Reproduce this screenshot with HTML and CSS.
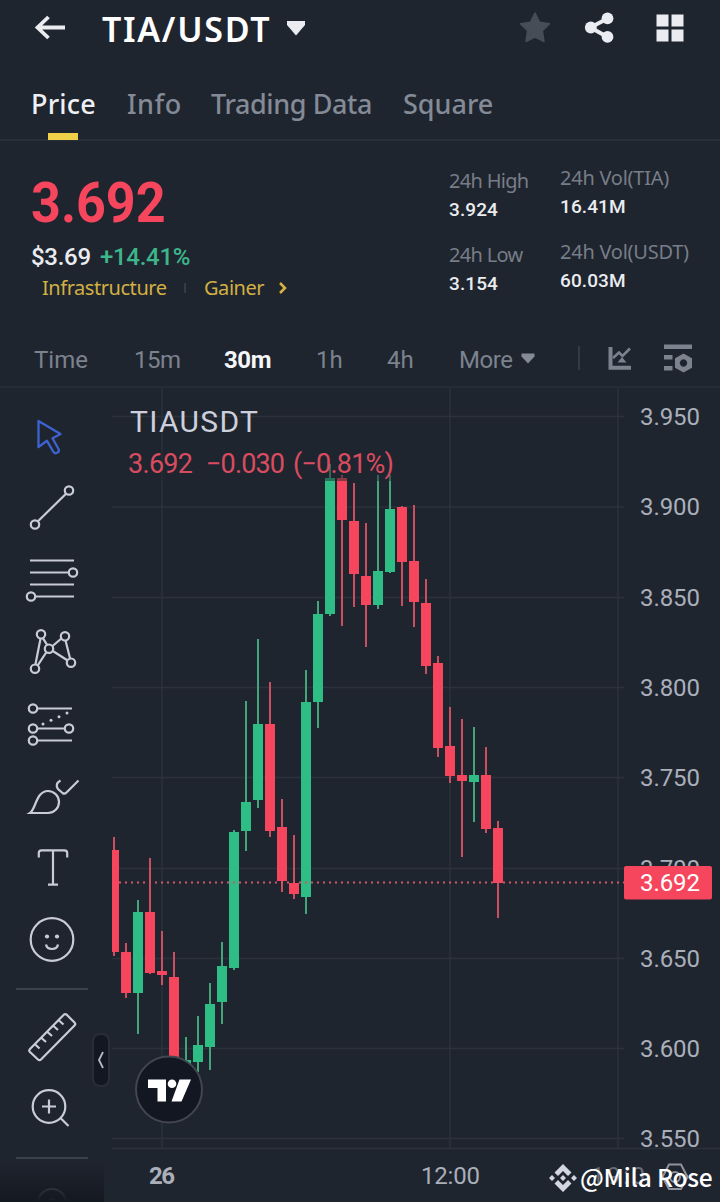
FILE: index.html
```html
<!DOCTYPE html>
<html lang="en">
<head>
<meta charset="utf-8">
<title>TIA/USDT</title>
<link rel="stylesheet" href="styles.css">
</head>
<body>
<div class="app">
  <header class="topbar">
    <svg class="back" width="32" height="26" viewBox="34 15 32 26"><path d="M65 27.5H37.500M48.500 17L37.500 27.500L48.500 38" fill="none" stroke="#eaecef" stroke-width="3.800"/></svg>
    <h1 class="pair">TIA/USDT</h1>
    <svg class="caret" width="20" height="16" viewBox="286 19 20 16"><path d="M287 20H305V24L296 34.500L287 24Z" fill="#eaecf2"/></svg>
    <div class="actions">
      <svg width="32" height="32" viewBox="519 12 32 32"><path d="M535 13L539.600 22.300L549.500 23.700L542.400 30.800L544 41.500L535 37L526 41.500L527.600 30.800L520.500 23.700L530.400 22.300Z" fill="#474d57" stroke="#474d57" stroke-width="1.500" stroke-linejoin="round"/></svg>
      <svg width="32" height="34" viewBox="584 11 32 34"><path d="M607.500 18.500L590.500 27.500L607.500 37" fill="none" stroke="#eaecf2" stroke-width="4"/><g fill="#eaecf2"><circle cx="607.500" cy="18.300" r="5.900"/><circle cx="590.800" cy="27.500" r="5.900"/><circle cx="607.500" cy="36.900" r="5.900"/></g></svg>
      <svg width="28" height="28" viewBox="656 13.500 28 28"><path d="M656.500 14H668.500V26H656.500ZM671.500 14H683.500V26H671.500ZM656.500 29H668.500V41H656.500ZM671.500 29H683.500V41H671.500Z" fill="#eaecf2"/></svg>
    </div>
  </header>
  <nav class="tabs">
    <span class="tab active">Price</span><span class="tab info">Info</span><span class="tab data">Trading Data</span><span class="tab square">Square</span>
  </nav>
  <section class="summary">
    <div class="quote">
      <div class="last">3.692</div>
      <div class="change"><span class="fiat">$3.69</span><span class="pct">+14.41%</span></div>
      <div class="tags"><span class="tag">Infrastructure</span><i class="sep"></i><span class="tag gainer">Gainer</span>
        <svg width="10" height="12" viewBox="0 0 10 12"><path d="M2 1L7 6L2 11" fill="none" stroke="#d9b440" stroke-width="2.500"/></svg></div>
    </div>
    <dl class="stats left"><dt>24h High</dt><dd>3.924</dd><dt>24h Low</dt><dd>3.154</dd></dl>
    <dl class="stats right"><dt>24h Vol(TIA)</dt><dd>16.41M</dd><dt>24h Vol(USDT)</dt><dd>60.03M</dd></dl>
  </section>
  <nav class="frames">
    <span class="frame time">Time</span><span class="frame m15">15m</span><span class="frame m30">30m</span><span class="frame h1">1h</span><span class="frame h4">4h</span><span class="frame more">More</span>
    <svg class="more-caret" width="14" height="11" viewBox="521 352 14 11"><path d="M521.500 352.500H534.500V355.500L528 362.500L521.500 355.500Z" fill="#848a96"/></svg>
    <i class="frame-sep"></i>
    <svg class="ind" width="24" height="26" viewBox="608 344 24 26"><path d="M610.500 346V366.800H631" fill="none" stroke="#7c828e" stroke-width="4"/><path d="M613 357L619 351.500L622.500 355L630 347.500" fill="none" stroke="#7c828e" stroke-width="2.500"/><path d="M617.500 361.500L622 356L626.500 361.500Z" fill="#7c828e"/></svg>
    <svg width="30" height="30" viewBox="663 343 30 30"><path d="M664 344.500H692V349H664ZM664 355H672.500V359.500H664ZM664 366H672.500V370.500H664Z" fill="#7c828e"/><path d="M683.500 353.500L692 358.200V367.800L683.500 372.500L675 367.800V358.200ZM683.500 359.300A3.700 3.700 0 1 0 683.510 359.300Z" fill="#7c828e" fill-rule="evenodd"/></svg>
  </nav>
  <main class="workspace">
    <aside class="tools">
      <svg class="tool" viewBox="16 401 72 72"><path d="M38.500 421L60.500 434L52.500 438.200L58.800 449.500Q59.500 452 56.500 453Q54.500 453.800 53.200 451.500L47 440.800L38.500 447Z" fill="none" stroke="#3d62d2" stroke-width="2.300" stroke-linejoin="round"/></svg>
      <svg class="tool" viewBox="16 473 72 72"><path d="M37.700 521.500L66.300 493.500"/><circle cx="69" cy="490.500" r="4.200"/><circle cx="35" cy="524.500" r="4.200"/></svg>
      <svg class="tool" viewBox="16 545 72 72"><path d="M30 560.500H74M30 572.500H68.500M30 584.500H74M35.500 596.500H74"/><circle cx="73" cy="572.500" r="4.200"/><circle cx="31" cy="596.500" r="4.200"/></svg>
      <svg class="tool" viewBox="16 617 72 72"><path d="M40.500 638.700L35.500 664M43 638.300L47 644.700M37.700 665.300L46.500 652M52.600 646L61.400 638.500M65.600 640.700L70 658.300M52.800 651L67.300 660.200"/><circle cx="41" cy="634.300" r="4.200"/><circle cx="65" cy="636.300" r="4.200"/><circle cx="49" cy="648.700" r="4.200"/><circle cx="71" cy="662.700" r="4.200"/><circle cx="35" cy="668.700" r="4.200"/></svg>
      <svg class="tool" viewBox="16 689 72 72"><path d="M37.500 708.500H72M37.500 728.500H64.500M37.500 740.500H72"/><circle cx="33" cy="708.500" r="4.200"/><circle cx="33" cy="728.500" r="4.200"/><circle cx="69" cy="728.500" r="4.200"/><circle cx="33" cy="740.500" r="4.200"/><g class="dots"><circle cx="43" cy="724" r="1.500"/><circle cx="51" cy="720.200" r="1.500"/><circle cx="59" cy="716.800" r="1.500"/><circle cx="67" cy="713" r="1.500"/></g></svg>
      <svg class="tool" viewBox="16 761 72 72"><path d="M30 813C36 809 36 791 48 791A11 11 0 0 1 48 813ZM60.500 780.500Q54.500 784 58 789L62.500 793Q64.500 794.500 66.500 792.500L78.500 780.500"/></svg>
      <svg class="tool" viewBox="16 833 72 72"><path d="M38.800 857.500V853Q38.800 850.300 41.500 850.300H64.500Q67.200 850.300 67.200 853V857.500M53 850.300V884.700M48 884.700H58"/></svg>
      <svg class="tool" viewBox="16 905 72 72"><circle cx="52" cy="939.500" r="21.300"/><path d="M46 944.500C47 950.500 57 950.500 58 944.500"/><g class="dots"><circle cx="47" cy="936.500" r="2.100"/><circle cx="57" cy="936.500" r="2.100"/></g></svg>
      <i class="tool-line"></i>
      <svg class="tool" viewBox="16 1002 72 72"><path d="M64 1014.500Q65.500 1013.500 67 1015L74.500 1022.500Q76 1024 74.500 1025.500L41 1059.500Q39.500 1061 38 1059.500L30 1052Q28.500 1050.500 30 1049ZM35 1044.300L39.500 1048.500M41.500 1038L46 1042M47.500 1032L52 1036M53.500 1026L58 1030M59 1020.500L63.500 1024.500"/></svg>
      <svg class="tool" viewBox="16 1074 72 72"><circle cx="49" cy="1106.500" r="16.300"/><path d="M49 1099.500V1113.500M42 1106.500H56M60.500 1118L68.500 1126"/></svg>
      <i class="tool-line"></i>
      <svg class="tool last-tool" viewBox="16 1170 72 32"><circle cx="52" cy="1202" r="14"/><circle cx="52" cy="1202" r="4"/></svg>
      <div class="fade"></div>
      <div class="handle"><svg width="8" height="18" viewBox="0 0 8 18"><path d="M6 1L2 9L6 17" fill="none" stroke="#b5bac5" stroke-width="1.800"/></svg></div>
    </aside>
    <svg class="chart" viewBox="104 388 616 814">
      <path class="grid" d="M112 416.500H624M112 507H624M112 597.500H624M112 687.500H624M112 777.500H624M112 868.500H624M112 958.500H624M112 1048.500H624M112 1138.500H624M162 388V1148M450 388V1148M618 388V1148M112 1148.500H720"/>
      <g id="candles"></g>
      <rect x="124" y="449" width="274" height="32" fill="#1f252f" opacity=".5"/>
      <path d="M119 882.500H624" stroke="#d4566a" stroke-width="2" stroke-dasharray="2 4"/>
      <text class="symbol" x="130" y="432" textLength="128">TIAUSDT</text>
      <g class="delta"><text x="128" y="473" textLength="65">3.692</text><text x="206" y="473" textLength="79">−0.030</text><text x="293" y="473" textLength="101">(−0.81%)</text></g>
      <g class="axis">
        <text x="640" y="425" textLength="60">3.950</text><text x="640" y="515" textLength="60">3.900</text>
        <text x="640" y="606" textLength="60">3.850</text><text x="640" y="696" textLength="60">3.800</text>
        <text x="640" y="786" textLength="60">3.750</text><text x="640" y="877" textLength="60">3.700</text>
        <text x="640" y="967" textLength="60">3.650</text><text x="640" y="1057" textLength="60">3.600</text>
        <text x="640" y="1147" textLength="60">3.550</text>
        <text class="day" x="149" y="1184" textLength="26">26</text><text x="421" y="1184" textLength="59">12:00</text>
        <text class="hidden-hour" x="591" y="1184" textLength="54">19:0</text>
      </g>
      <rect x="624" y="866" width="88" height="33.500" rx="2" fill="#f6465d"/>
      <text class="price-tag" x="640" y="891" textLength="60">3.692</text>
      <circle cx="169" cy="1089.500" r="33" fill="#131722" stroke="#42464f" stroke-width="2"/>
      <path d="M148 1079.500H166V1101.500H157.500V1088H148ZM179.500 1079.500H191L181.500 1101.500H171.500Z" fill="#fff"/><circle cx="172" cy="1083.700" r="4.300" fill="#fff"/>
      <path d="M669 1164.500H681L687.500 1177L681 1189H669L662.500 1177Z" fill="none" stroke="#8e939e" stroke-width="2"/><circle cx="675" cy="1177" r="5" fill="none" stroke="#8e939e" stroke-width="2"/>
    </svg>
  </main>
  <div class="watermark">
    <svg width="28" height="28" viewBox="0 0 28 28"><path d="M14 0L22.500 8.500L19 12L14 7L9 12L5.500 8.500ZM14 28L22.500 19.500L19 16L14 21L9 16L5.500 19.500ZM3 11L6 14L3 17L0 14ZM25 11L28 14L25 17L22 14ZM14 11L17 14L14 17L11 14Z" fill="#d3d5e0"/></svg>
    <span>@Mila Rose</span>
  </div>
</div>
<script src="chart.js"></script>
</body>
</html>
```
FILE: styles.css
```css
* { box-sizing: border-box; }
body { margin: 0; background: #1f252f; }
svg { display: block; flex: none; }
.app { position: relative; width: 720px; height: 1202px; overflow: hidden; background: #1f252f; color: #eaecef; font-family: "Noto Sans", sans-serif; white-space: nowrap; }
.topbar { display: flex; align-items: center; height: 56px; padding-left: 34px; }
.pair { width: 183px; margin: 1px 0 0 36px; font-size: 34px; line-height: 50px; font-weight: 600; letter-spacing: 1.7px; color: #fff; }
.caret { margin-left: 1px; }
.actions { display: flex; align-items: center; gap: 33px; margin-left: 213px; }
.actions svg:last-child { margin-left: 7px; }
.tabs { display: flex; height: 85px; padding: 28px 0 0 31px; border-bottom: 2px solid #292f39; font-size: 27px; line-height: 40px; font-weight: 500; color: #848a96; }
.tab { position: relative; }
.active { width: 96px; letter-spacing: 0.2px; color: #eef0f5; }
.active::after { content: ""; position: absolute; left: 17px; top: 49px; width: 30px; height: 7px; background: #f0d048; }
.info { width: 84px; letter-spacing: 0.5px; }
.data { width: 192px; letter-spacing: -0.4px; }
.summary { display: flex; height: 189px; padding-left: 31px; }
.quote { width: 418px; padding-top: 32px; }
.last { height: 61px; font: 700 56px/61px Roboto, sans-serif; color: #f6465d; transform: scaleX(0.93); transform-origin: 0 0; }
.change { display: flex; height: 44px; font: 500 24px/46px Roboto, sans-serif; letter-spacing: -0.3px; }
.fiat { width: 69px; }
.pct { color: #3cb68a; }
.tags { display: flex; align-items: center; padding-left: 11px; font-size: 20px; line-height: 20px; letter-spacing: -0.45px; color: #d2b044; }
.tag { width: 142px; }
.sep { width: 2px; height: 10px; margin-right: 18px; background: #343b46; }
.gainer { width: 74px; }
.stats { width: 111px; margin: 26px 0 0; }
.stats.right { margin-top: 23px; }
dt { font-size: 20px; line-height: 28px; letter-spacing: -0.7px; color: #777d88; }
.right dt { letter-spacing: -0.25px; }
dd { margin: 0 0 16px; font: 500 19px/30px Roboto, sans-serif; letter-spacing: 0.1px; }
.frames { display: flex; align-items: center; height: 58px; padding-left: 34px; border-bottom: 2px solid #262c36; font: 400 24px/58px Roboto, sans-serif; color: #7c828e; }
.frame { position: relative; top: 1.5px; }
.time { width: 100px; }
.m15 { width: 90px; letter-spacing: -0.5px; }
.m30 { width: 92px; font-weight: 700; letter-spacing: -0.4px; color: #f5f6f8; }
.h1 { width: 71px; }
.h4 { width: 72px; }
.more { width: 62px; letter-spacing: -0.4px; }
.frame-sep { width: 2px; height: 24px; margin: 0 28px 0 43px; background: #343a45; }
.ind { margin-right: 31px; }
.workspace { display: flex; height: 814px; }
.tools { position: relative; display: flex; flex-direction: column; width: 104px; padding: 13px 16px 0; }
.tool { width: 72px; height: 72px; fill: none; stroke: #c9ccd8; stroke-width: 2.2; }
.dots { fill: #c9ccd8; stroke: none; }
.tool-line { flex: none; height: 2px; margin: 11px 0 12px; background: #3b414c; }
.last-tool { height: 32px; opacity: 0.4; }
.fade { position: absolute; left: 0; bottom: 0; width: 104px; height: 42px; background: linear-gradient(rgba(19, 23, 32, 0), #141821); }
.handle { position: absolute; z-index: 1; left: 92px; top: 645px; width: 18px; height: 54px; border: 2px solid #292d39; border-radius: 8px; background: #131722; display: flex; align-items: center; justify-content: center; }
.chart { width: 616px; height: 814px; font-family: Roboto, sans-serif; }
.grid { stroke: #2c323c; stroke-width: 1.5; fill: none; }
.up { fill: #2ebd85; }
.down { fill: #f6465d; }
.up-wick { fill: #42a57c; }
.down-wick { fill: #c94f61; }
.symbol { font-size: 30px; fill: #cdd0dc; }
.delta { font-size: 27px; fill: #d94c60; }
.axis { font-size: 24px; fill: #aaafba; }
.day { font-weight: 700; }
.hidden-hour { fill: #686d78; }
.price-tag { font-size: 24px; fill: #fff; }
.watermark { position: absolute; left: 549px; top: 1158px; display: flex; align-items: center; gap: 3px; height: 40px; font: 500 24.5px/36px "Noto Sans CJK SC", sans-serif; color: #fff; }
.watermark span { margin-top: -3px; letter-spacing: -0.2px; }
```
FILE: chart.js
```js
// Each candle: direction, wick top, body top, body bottom, wick bottom.
const candles = [
  ["down", 837, 850, 952, 956], ["down", 943, 952, 993, 998], ["up", 900, 912, 993, 1034],
  ["down", 858, 912, 973, 974], ["down", 931, 971, 975, 985], ["down", 952, 977, 1062, 1066],
  ["up", 1037, 1060, 1064, 1066], ["up", 1016, 1045, 1062, 1072], ["up", 983, 1004, 1047, 1070],
  ["up", 942, 966, 1002, 1024], ["up", 830, 832, 968, 970], ["up", 701, 802, 831, 851],
  ["up", 639, 724, 800, 808], ["down", 682, 724, 831, 837], ["down", 799, 827, 881, 892],
  ["down", 835, 883, 894, 899], ["up", 670, 702, 897, 914], ["up", 601, 614, 702, 728],
  ["up", 464, 478, 614, 616], ["down", 475, 478, 520, 626], ["down", 483, 521, 574, 607],
  ["down", 523, 576, 605, 647], ["up", 475, 571, 605, 609], ["up", 475, 509, 572, 573],
  ["down", 506, 507, 562, 606], ["down", 505, 561, 602, 627], ["down", 579, 603, 666, 674],
  ["down", 656, 663, 748, 757], ["down", 707, 746, 776, 783], ["down", 719, 775, 781, 857],
  ["up", 727, 775, 782, 822], ["down", 747, 775, 829, 833], ["down", 821, 828, 883, 918]
];
const layer = document.getElementById("candles");
function bar(cls, x, y, w, h) {
  const r = document.createElementNS("http://www.w3.org/2000/svg", "rect");
  r.setAttribute("class", cls);
  r.setAttribute("x", x);
  r.setAttribute("y", y);
  r.setAttribute("width", w);
  r.setAttribute("height", h);
  layer.appendChild(r);
}
candles.forEach(([dir, high, top, bottom, low], i) => {
  const x = 114 + i * 12;
  const left = Math.max(112, x - 5);
  bar(dir + "-wick", x - 1, high, 2, low - high);
  bar(dir, left, top, x + 5 - left, bottom - top);
});
```
